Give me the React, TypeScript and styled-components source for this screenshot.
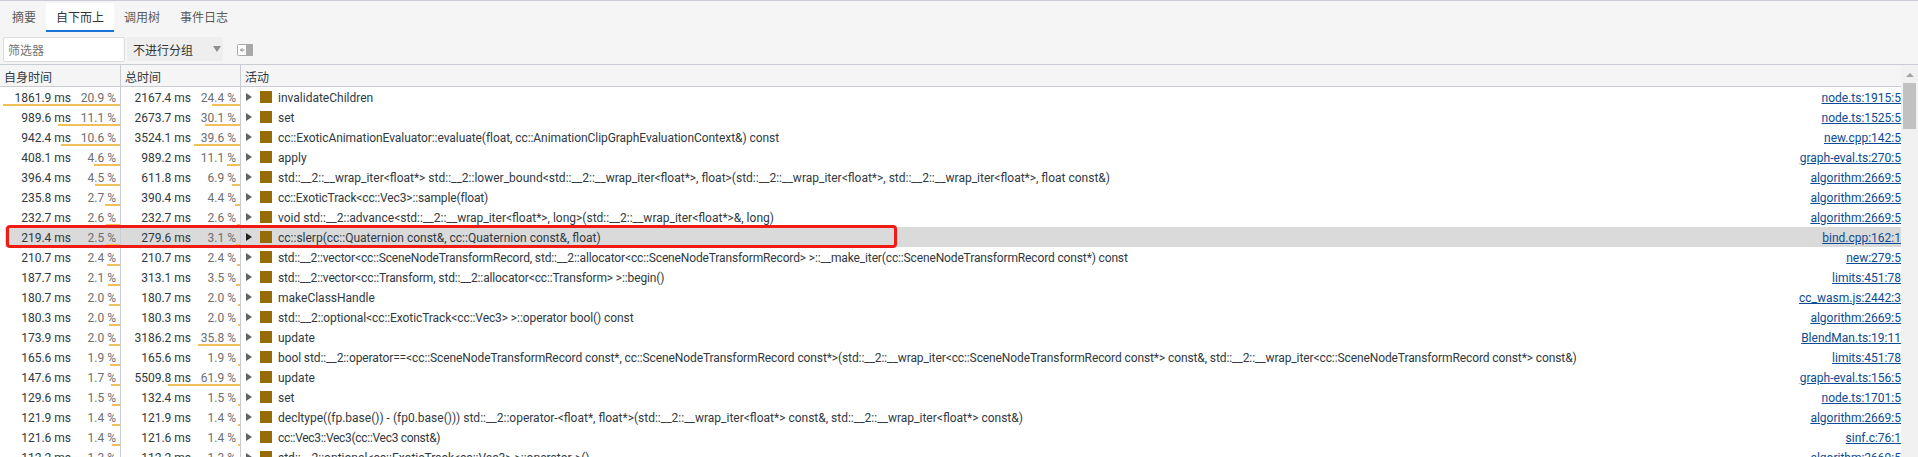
import React from "react";
import styled, { createGlobalStyle } from "styled-components";

const GlobalStyle = createGlobalStyle`
  html, body {
    margin: 0;
    padding: 0;
    background: #fff;
  }
  body {
    font-family: Roboto, "Noto Sans CJK SC", sans-serif;
    font-size: 12px;
    color: #303942;
  }
`;

interface RowData {
  self: string;
  selfPct: string;
  selfBar: number;
  total: string;
  totalPct: string;
  totalBar: number;
  name: string;
  source: string;
  tracking?: number;
}

const rows: RowData[] = [
  { self: "1861.9 ms", selfPct: "20.9 %", selfBar: 117, total: "2167.4 ms", totalPct: "24.4 %", totalBar: 28, name: "invalidateChildren", source: "node.ts:1915:5" },
  { self: "989.6 ms", selfPct: "11.1 %", selfBar: 62, total: "2673.7 ms", totalPct: "30.1 %", totalBar: 35, name: "set", source: "node.ts:1525:5" },
  { self: "942.4 ms", selfPct: "10.6 %", selfBar: 59, total: "3524.1 ms", totalPct: "39.6 %", totalBar: 46, name: "cc::ExoticAnimationEvaluator::evaluate(float, cc::AnimationClipGraphEvaluationContext&) const", source: "new.cpp:142:5", tracking: -0.06 },
  { self: "408.1 ms", selfPct: "4.6 %", selfBar: 26, total: "989.2 ms", totalPct: "11.1 %", totalBar: 13, name: "apply", source: "graph-eval.ts:270:5" },
  { self: "396.4 ms", selfPct: "4.5 %", selfBar: 25, total: "611.8 ms", totalPct: "6.9 %", totalBar: 8, name: "std::__2::__wrap_iter<float*> std::__2::lower_bound<std::__2::__wrap_iter<float*>, float>(std::__2::__wrap_iter<float*>, std::__2::__wrap_iter<float*>, float const&)", source: "algorithm:2669:5" },
  { self: "235.8 ms", selfPct: "2.7 %", selfBar: 15, total: "390.4 ms", totalPct: "4.4 %", totalBar: 5, name: "cc::ExoticTrack<cc::Vec3>::sample(float)", source: "algorithm:2669:5", tracking: -0.14 },
  { self: "232.7 ms", selfPct: "2.6 %", selfBar: 14, total: "232.7 ms", totalPct: "2.6 %", totalBar: 3, name: "void std::__2::advance<std::__2::__wrap_iter<float*>, long>(std::__2::__wrap_iter<float*>&, long)", source: "algorithm:2669:5" },
  { self: "219.4 ms", selfPct: "2.5 %", selfBar: 14, total: "279.6 ms", totalPct: "3.1 %", totalBar: 4, name: "cc::slerp(cc::Quaternion const&, cc::Quaternion const&, float)", source: "bind.cpp:162:1" },
  { self: "210.7 ms", selfPct: "2.4 %", selfBar: 13, total: "210.7 ms", totalPct: "2.4 %", totalBar: 3, name: "std::__2::vector<cc::SceneNodeTransformRecord, std::__2::allocator<cc::SceneNodeTransformRecord> >::__make_iter(cc::SceneNodeTransformRecord const*) const", source: "new:279:5", tracking: -0.14 },
  { self: "187.7 ms", selfPct: "2.1 %", selfBar: 12, total: "313.1 ms", totalPct: "3.5 %", totalBar: 4, name: "std::__2::vector<cc::Transform, std::__2::allocator<cc::Transform> >::begin()", source: "limits:451:78", tracking: -0.13 },
  { self: "180.7 ms", selfPct: "2.0 %", selfBar: 11, total: "180.7 ms", totalPct: "2.0 %", totalBar: 2, name: "makeClassHandle", source: "cc_wasm.js:2442:3" },
  { self: "180.3 ms", selfPct: "2.0 %", selfBar: 11, total: "180.3 ms", totalPct: "2.0 %", totalBar: 2, name: "std::__2::optional<cc::ExoticTrack<cc::Vec3> >::operator bool() const", source: "algorithm:2669:5", tracking: -0.08 },
  { self: "173.9 ms", selfPct: "2.0 %", selfBar: 11, total: "3186.2 ms", totalPct: "35.8 %", totalBar: 42, name: "update", source: "BlendMan.ts:19:11" },
  { self: "165.6 ms", selfPct: "1.9 %", selfBar: 10, total: "165.6 ms", totalPct: "1.9 %", totalBar: 2, name: "bool std::__2::operator==<cc::SceneNodeTransformRecord const*, cc::SceneNodeTransformRecord const*>(std::__2::__wrap_iter<cc::SceneNodeTransformRecord const*> const&, std::__2::__wrap_iter<cc::SceneNodeTransformRecord const*> const&)", source: "limits:451:78", tracking: -0.1 },
  { self: "147.6 ms", selfPct: "1.7 %", selfBar: 9, total: "5509.8 ms", totalPct: "61.9 %", totalBar: 72, name: "update", source: "graph-eval.ts:156:5" },
  { self: "129.6 ms", selfPct: "1.5 %", selfBar: 8, total: "132.4 ms", totalPct: "1.5 %", totalBar: 2, name: "set", source: "node.ts:1701:5" },
  { self: "121.9 ms", selfPct: "1.4 %", selfBar: 8, total: "121.9 ms", totalPct: "1.4 %", totalBar: 2, name: "decltype((fp.base()) - (fp0.base())) std::__2::operator-<float*, float*>(std::__2::__wrap_iter<float*> const&, std::__2::__wrap_iter<float*> const&)", source: "algorithm:2669:5" },
  { self: "121.6 ms", selfPct: "1.4 %", selfBar: 8, total: "121.6 ms", totalPct: "1.4 %", totalBar: 2, name: "cc::Vec3::Vec3(cc::Vec3 const&)", source: "sinf.c:76:1", tracking: -0.3 },
  { self: "112.2 ms", selfPct: "1.3 %", selfBar: 7, total: "112.2 ms", totalPct: "1.3 %", totalBar: 2, name: "std::__2::optional<cc::ExoticTrack<cc::Vec3> >::operator->()", source: "algorithm:2669:5" },
];

const Page = styled.div`
  width: 1918px;
  height: 457px;
  overflow: hidden;
  border-top: 1px solid #c9cdd3;
  box-sizing: border-box;
`;

const TabBar = styled.div`
  display: flex;
  height: 31px;
  padding: 2px 0 0 2px;
  box-sizing: border-box;
  background: #f5f5f5;
`;

const Tab = styled.div<{ $active?: boolean }>`
  display: flex;
  align-items: center;
  padding: 0 10px;
  height: 29px;
  box-sizing: border-box;
  font-size: 12px;
  color: ${(p) => (p.$active ? "#333" : "#5a5a5a")};
  background: ${(p) => (p.$active ? "#fff" : "transparent")};
  border-bottom: 2px solid ${(p) => (p.$active ? "#1a73d8" : "transparent")};
`;

const Toolbar = styled.div`
  display: flex;
  align-items: flex-start;
  height: 33px;
  padding: 5px 0 0 3px;
  box-sizing: border-box;
  background: #f5f5f5;
  border-bottom: 1px solid #c9cdd3;
`;

const FilterInput = styled.div`
  display: flex;
  align-items: center;
  width: 122px;
  height: 25px;
  padding-left: 4px;
  box-sizing: border-box;
  background: #fff;
  border: 1px solid #dcdcdc;
  border-radius: 2px;
  color: #757575;
`;

const GroupSelect = styled.div`
  display: flex;
  align-items: center;
  justify-content: space-between;
  width: 96px;
  height: 24px;
  margin-left: 2px;
  padding: 0 2px 0 6px;
  box-sizing: border-box;
  background: #eee;
  border-radius: 2px;
  color: #333;
`;

const Arrow = styled.span`
  width: 0;
  height: 0;
  border-left: 4.5px solid transparent;
  border-right: 4.5px solid transparent;
  border-top: 6px solid #8f8f8f;
`;

const PanelToggle = styled.svg`
  margin: 7px 0 0 14px;
`;

const Table = styled.div`
  display: flex;
  flex: 1;
  position: relative;
`;

const Content = styled.div`
  flex: 1;
  min-width: 0;
`;

const Header = styled.div`
  display: grid;
  grid-template-columns: 121px 120px 1fr;
`;

const HeaderCell = styled.div`
  display: flex;
  align-items: center;
  height: 22px;
  padding: 1px 0 0 4px;
  box-sizing: border-box;
  background: #f5f5f5;
  border-bottom: 1px solid #c9cdd3;
  border-right: 1px solid #c9cdd3;
  font-size: 12px;
  color: #303942;

  &:last-child {
    border-right: 0;
  }
`;

const Row = styled.div<{ $selected?: boolean }>`
  display: grid;
  grid-template-columns: 121px 120px 1fr;
  height: 20px;
  background: ${(p) => (p.$selected ? "linear-gradient(to right, #fff 5px, #dadada 5px)" : "#fff")};
`;

const TimeCell = styled.div`
  position: relative;
  display: flex;
  justify-content: flex-end;
  align-items: center;
  height: 20px;
  padding: 1px 4px 0 0;
  box-sizing: border-box;
  border-right: 1px solid #c9cdd3;
`;

const Ms = styled.span`
  color: #303942;
`;

const Pct = styled.span`
  display: inline-block;
  width: 45px;
  text-align: right;
  color: #6e6e6e;
`;

const Bar = styled.div`
  position: absolute;
  right: 0;
  bottom: 1px;
  height: 2px;
  background: #f2c05a;
`;

const ActivityCell = styled.div`
  display: flex;
  align-items: center;
  min-width: 0;
`;

const Chevron = styled.span<{ $selected?: boolean }>`
  width: 0;
  height: 0;
  margin-left: 5px;
  border-top: 4px solid transparent;
  border-bottom: 4px solid transparent;
  border-left: 6px solid ${(p) => (p.$selected ? "#222" : "#5f6368")};
`;

const Swatch = styled.span`
  flex: none;
  width: 12px;
  height: 12px;
  margin: 0 6px 0 8px;
  background: #956c08;
`;

const Name = styled.span<{ $tracking?: number }>`
  flex: 1;
  padding-top: 1px;
  white-space: nowrap;
  overflow: hidden;
  letter-spacing: ${(p) => p.$tracking ?? 0}px;
`;

const Source = styled.a`
  flex: none;
  padding-top: 1px;
  color: #0b4a94;
  text-decoration: underline;
`;

const Highlight = styled.div`
  position: absolute;
  left: 6px;
  top: 160px;
  width: 891px;
  height: 23px;
  box-sizing: border-box;
  border: 3px solid #f01c14;
  border-radius: 4px;
  pointer-events: none;
`;

const Scrollbar = styled.div`
  display: flex;
  flex-direction: column;
  align-items: center;
  flex: none;
  width: 17px;
  background: #f1f1f1;
`;

const ScrollArrow = styled.span`
  width: 0;
  height: 0;
  margin-top: 8px;
  border-left: 4px solid transparent;
  border-right: 4px solid transparent;
  border-bottom: 4px solid #a3a3a3;
`;

const ScrollThumb = styled.div`
  width: 13px;
  height: 46px;
  margin-top: 6px;
  background: #c1c1c1;
`;

export default function App() {
  return (
    <>
      <GlobalStyle />
      <Page>
        <TabBar>
          <Tab>摘要</Tab>
          <Tab $active>自下而上</Tab>
          <Tab>调用树</Tab>
          <Tab>事件日志</Tab>
        </TabBar>
        <Toolbar>
          <FilterInput>筛选器</FilterInput>
          <GroupSelect>
            不进行分组
            <Arrow />
          </GroupSelect>
          <PanelToggle width="16" height="12" viewBox="0 0 16 12">
            <rect x="0.5" y="0.5" width="15" height="11" rx="1" fill="#fff" stroke="#a8a8a8" />
            <path d="M9 0h6a1 1 0 0 1 1 1v10a1 1 0 0 1-1 1H9z" fill="#a8a8a8" />
            <path d="M3.5 6H7.5M3.5 6l2-1.6M3.5 6l2 1.6" stroke="#8a8a8a" fill="none" />
          </PanelToggle>
        </Toolbar>
        <Table>
          <Content>
            <Header>
              <HeaderCell>自身时间</HeaderCell>
              <HeaderCell>总时间</HeaderCell>
              <HeaderCell>活动</HeaderCell>
            </Header>
            {rows.map((r, i) => (
              <Row key={i} $selected={i === 7}>
                <TimeCell>
                  <Ms>{r.self}</Ms>
                  <Pct>{r.selfPct}</Pct>
                  <Bar style={{ width: r.selfBar }} />
                </TimeCell>
                <TimeCell>
                  <Ms>{r.total}</Ms>
                  <Pct>{r.totalPct}</Pct>
                  <Bar style={{ width: r.totalBar }} />
                </TimeCell>
                <ActivityCell>
                  <Chevron $selected={i === 7} />
                  <Swatch />
                  <Name $tracking={r.tracking}>{r.name}</Name>
                  <Source>{r.source}</Source>
                </ActivityCell>
              </Row>
            ))}
          </Content>
          <Scrollbar>
            <ScrollArrow />
            <ScrollThumb />
          </Scrollbar>
          <Highlight />
        </Table>
      </Page>
    </>
  );
}
